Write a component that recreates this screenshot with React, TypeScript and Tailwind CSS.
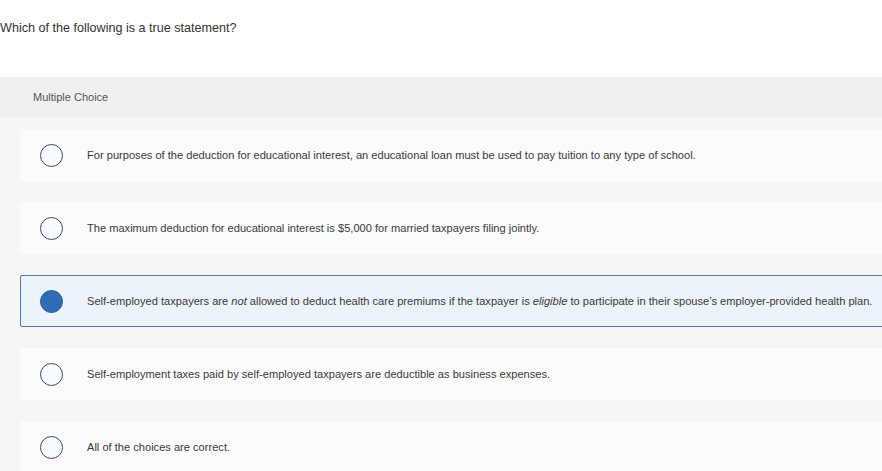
import React from "react";

const options: { text: React.ReactNode; selected?: boolean }[] = [
  { text: "For purposes of the deduction for educational interest, an educational loan must be used to pay tuition to any type of school." },
  { text: "The maximum deduction for educational interest is $5,000 for married taxpayers filing jointly." },
  {
    text: (
      <>
        Self-employed taxpayers are <em>not</em> allowed to deduct health care premiums if the taxpayer is <em>eligible</em> to participate in their spouse’s employer-provided health plan.
      </>
    ),
    selected: true,
  },
  { text: "Self-employment taxes paid by self-employed taxpayers are deductible as business expenses." },
  { text: "All of the choices are correct." },
];

export default function App() {
  return (
    <div className="w-[882px] h-[471px] overflow-hidden bg-white text-[#333]" style={{ fontFamily: '"Liberation Sans", Arial, sans-serif' }}>
      <div className="h-[77px] pt-[20px] text-[12.6px] leading-[17px] text-[#333]">
        Which of the following is a true statement?
      </div>
      <div className="h-[40px] bg-[#f0f0f0] pl-[33px] flex items-center text-[11px] text-[#555]">
        Multiple Choice
      </div>
      <div className="bg-[#f6f6f6] pt-[12px] pl-[20px] flex flex-col gap-[21px] h-[354px]">
        {options.map((o, i) => (
          <div
            key={i}
            className={`w-[900px] h-[52px] shrink-0 flex items-center rounded-[2px] ${
              o.selected ? "bg-[#ebf3fc] border border-[#4a78b0]" : "bg-[#fbfbfb]"
            }`}
          >
            <div className={`${o.selected ? "ml-[19px]" : "ml-[20px]"} w-[23px] h-[23px] rounded-full shrink-0 ${
              o.selected ? "bg-[#2f6db5] border border-[#2a5d9a]" : "bg-[#f7fbff] border-[1.5px] border-[#3b4a5e]"
            }`} />
            <div className="ml-[24px] text-[11.1px] text-[#3a3a3a] whitespace-nowrap">{o.text}</div>
          </div>
        ))}
      </div>
    </div>
  );
}
